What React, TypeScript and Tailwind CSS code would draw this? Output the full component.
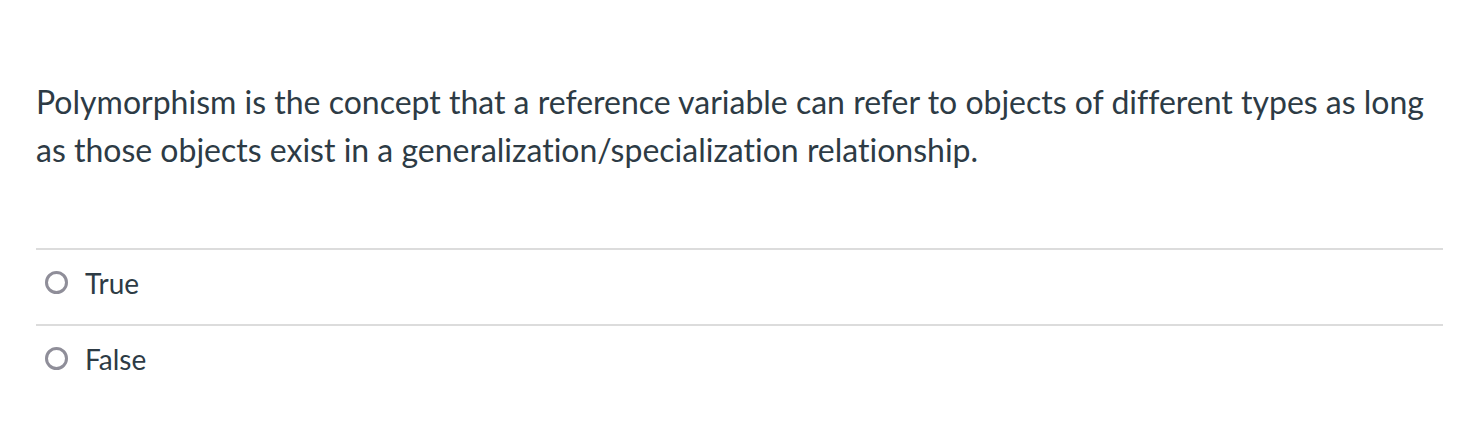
import React from 'react';

const answers = ['True', 'False'];

const App: React.FC = () => {
    return (
        <div className="min-h-[440px] w-[1480px] bg-white pt-[78px] pl-[36px] pr-[37px] text-[#2d3b45] [font-variant-ligatures:no-common-ligatures]" style={{ fontFamily: 'Lato, "Open Sans", sans-serif' }}>
            {/* question text */}
            <p className="text-[32px] leading-[48px]">
                Polymorphism is the concept that a reference variable can refer to objects of different types as long as those
                objects exist in a generalization/specialization relationship.
            </p>

            <div className="mt-[74px]">
                {answers.map((a) => (
                    <label key={a} className="flex h-[76px] items-center border-t-2 border-[#dcdcdc] pb-[9px] pl-[9px]">
                        <span className="h-[23px] w-[23px] rounded-full border-[3.5px] border-[#8f8e99]"></span>
                        <span className="ml-[17px] text-[28px] leading-none">{a}</span>
                    </label>
                ))}
            </div>
        </div>
    );
};

export default App;
